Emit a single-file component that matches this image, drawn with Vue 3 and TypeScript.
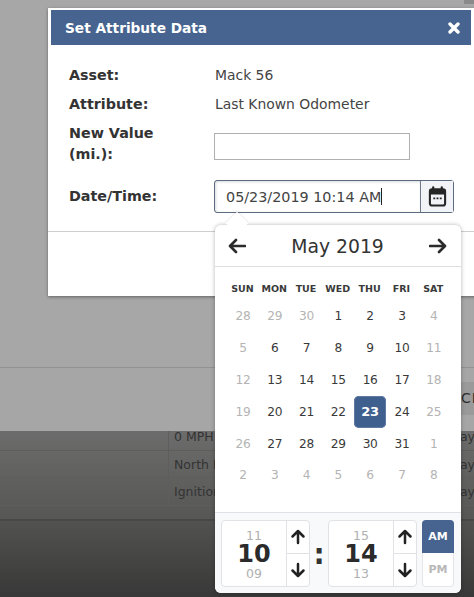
<script setup lang="ts">
const weekdays = ['SUN', 'MON', 'TUE', 'WED', 'THU', 'FRI', 'SAT']
interface Day { n: number; muted: boolean; selected: boolean }
const seq: [number, boolean][] = [
  [28, true], [29, true], [30, true], [1, false], [2, false], [3, false], [4, true],
  [5, true], [6, false], [7, false], [8, false], [9, false], [10, false], [11, true],
  [12, true], [13, false], [14, false], [15, false], [16, false], [17, false], [18, true],
  [19, true], [20, false], [21, false], [22, false], [23, false], [24, false], [25, true],
  [26, true], [27, false], [28, false], [29, false], [30, false], [31, false], [1, true],
  [2, true], [3, true], [4, true], [5, true], [6, true], [7, true], [8, true]
]
const days: Day[] = seq.map(([n, muted]) => ({ n, muted, selected: n === 23 && !muted }))
const rows = ['0 MPH', 'North D', 'Ignition']
</script>

<template>
  <div class="page">
    <div class="top-band"><div class="corner"></div></div>
    <div class="mid-band"><div class="cut-btn">CL</div></div>
    <div class="table">
      <div v-for="r in rows" :key="r" class="tr">
        <div class="td-left"></div>
        <div class="td-main">{{ r }}</div>
        <div class="td-end">ay</div>
      </div>
      <div class="tr-empty"></div>
    </div>
    <div class="foot"></div>

    <section class="modal">
      <header class="modal-head">
        <h2>Set Attribute Data</h2>
        <svg class="close" viewBox="0 0 12 12" width="12" height="12"><path d="M2 2l8 8M10 2l-8 8" stroke="#fff" stroke-width="3.4" stroke-linecap="round"/></svg>
      </header>
      <div class="modal-body">
        <div class="row r1"><span class="lab">Asset:</span><span class="val">Mack 56</span></div>
        <div class="row r2"><span class="lab">Attribute:</span><span class="val">Last Known Odometer</span></div>
        <div class="row r3"><span class="lab">New Value<br />(mi.):</span><div class="text-in"></div></div>
        <div class="row r4">
          <span class="lab">Date/Time:</span>
          <div class="date-in">
            <div class="date-text">05/23/2019 10:14 AM<i class="caret"></i></div>
            <div class="date-btn">
              <svg viewBox="0 0 20 22" width="19" height="21">
                <path d="M5.5 1.5v4M14.5 1.5v4" stroke="#262626" stroke-width="2.4" stroke-linecap="round"/>
                <rect x="2" y="3.5" width="16" height="17" rx="2.2" fill="none" stroke="#262626" stroke-width="2.2"/>
                <rect x="2" y="3.5" width="16" height="5.4" fill="#262626"/>
                <path d="M5.6 13h2M9 13h2M12.4 13h2" stroke="#262626" stroke-width="1.7"/>
              </svg>
            </div>
          </div>
        </div>
      </div>
      <div class="modal-foot"></div>
    </section>

    <section class="picker">
      <div class="nub"></div>
      <div class="pick-head">
        <svg viewBox="0 0 18 16" width="18" height="16"><path d="M8 2L2 8l6 6M2.5 8H17" fill="none" stroke="#2b2b2b" stroke-width="2.6" stroke-linecap="round" stroke-linejoin="round"/></svg>
        <span class="month">May 2019</span>
        <svg viewBox="0 0 18 16" width="18" height="16"><path d="M10 2l6 6-6 6M15.5 8H1" fill="none" stroke="#2b2b2b" stroke-width="2.6" stroke-linecap="round" stroke-linejoin="round"/></svg>
      </div>
      <div class="cal">
        <div class="weeks"><span v-for="w in weekdays" :key="w">{{ w }}</span></div>
        <div class="grid">
          <span v-for="(d, i) in days" :key="i" class="day" :class="{ muted: d.muted, selected: d.selected }">{{ d.n }}</span>
        </div>
      </div>
      <div class="time">
        <div class="spin">
          <div class="nums"><span class="ghost">11</span><strong>10</strong><span class="ghost">09</span></div>
          <div class="arrows">
            <div class="arr"><svg viewBox="0 0 16 16" width="16" height="16"><path d="M2.5 7.5L8 2l5.5 5.5M8 3v11" fill="none" stroke="#222" stroke-width="2.5" stroke-linecap="round" stroke-linejoin="round"/></svg></div>
            <div class="arr"><svg viewBox="0 0 16 16" width="16" height="16"><path d="M2.5 8.5L8 14l5.5-5.5M8 13V2" fill="none" stroke="#222" stroke-width="2.5" stroke-linecap="round" stroke-linejoin="round"/></svg></div>
          </div>
        </div>
        <span class="colon">:</span>
        <div class="spin">
          <div class="nums"><span class="ghost">15</span><strong>14</strong><span class="ghost">13</span></div>
          <div class="arrows">
            <div class="arr"><svg viewBox="0 0 16 16" width="16" height="16"><path d="M2.5 7.5L8 2l5.5 5.5M8 3v11" fill="none" stroke="#222" stroke-width="2.5" stroke-linecap="round" stroke-linejoin="round"/></svg></div>
            <div class="arr"><svg viewBox="0 0 16 16" width="16" height="16"><path d="M2.5 8.5L8 14l5.5-5.5M8 13V2" fill="none" stroke="#222" stroke-width="2.5" stroke-linecap="round" stroke-linejoin="round"/></svg></div>
          </div>
        </div>
        <div class="ampm">
          <div class="am">AM</div>
          <div class="pm">PM</div>
        </div>
      </div>
    </section>
  </div>
</template>

<style>
html, body { margin: 0; background: #a6a6a6; overflow: hidden; }
</style>

<style scoped>
.page {
  position: relative;
  width: 474px;
  height: 597px;
  overflow: hidden;
  font-family: "DejaVu Sans", Verdana, sans-serif;
  background: #444;
  display: flex;
  flex-direction: column;
}
.top-band { height: 368px; background: #a7a7a7; border-bottom: 1px solid #929292; box-sizing: border-box; flex: none; display: flex; justify-content: flex-end; }
.corner { width: 10px; height: 4px; background: #8a8a8a; }
.mid-band { height: 63px; background: #a6a6a6; box-sizing: border-box; flex: none; padding: 14px 0 0 461px; position: relative; z-index: 1; }
.cut-btn { width: 40px; height: 33px; box-sizing: border-box; background: #9a9a9a; font-size: 14px; line-height: 33px; color: #2e2e2e; white-space: nowrap; letter-spacing: 1px; }
.table { flex: none; background: linear-gradient(#6c6c6c, #565654); overflow: hidden; }
.tr { display: flex; height: 27.5px; border-bottom: 1px solid #5e5e5c; box-sizing: border-box; font-size: 12.5px; color: #333; }
.tr:first-child { margin-top: -8px; }
.td-left { width: 168px; border-right: 1px solid #5e5e5e; flex: none; }
.td-main { flex: 1; padding-left: 5px; line-height: 27px; }
.td-end { line-height: 27px; margin-right: -1px; }
.tr-empty { height: 15px; border-bottom: 2px solid #484846; box-sizing: border-box; }
.foot { flex: 1; background: linear-gradient(#525250, #383838); }

.modal {
  position: absolute;
  z-index: 2;
  left: 48px;
  top: 8px;
  width: 440px;
  height: 288px;
  background: #fff;
  box-sizing: border-box;
  padding: 2px 3px 0;
  box-shadow: 0 1px 3px rgba(0, 0, 0, .4);
  display: flex;
  flex-direction: column;
}
.modal-head {
  height: 35px;
  flex: none;
  background: #46648f;
  color: #fff;
  display: flex;
  align-items: center;
  justify-content: space-between;
  padding: 0 11px 0 14px;
  margin-right: 14px;
}
.modal-head h2 { margin: 0; font-size: 13.7px; font-weight: 700; }
.close { display: block; }
.modal-body { flex: none; padding-left: 18px; height: 186px; font-size: 14px; position: relative; }
.row { display: flex; align-items: center; }
.lab { width: 145px; flex: none; font-weight: 700; font-size: 14.3px; line-height: 21px; color: #333; }
.val { color: #444; padding-left: 1px; font-size: 13.9px; }
.r1 { height: 20px; margin-top: 20px; }
.r2 { height: 20px; margin-top: 9px; }
.r3 { height: 44px; margin-top: 8px; }
.r4 { height: 33px; margin-top: 14px; }
.text-in { width: 196px; height: 27px; box-sizing: border-box; border: 1px solid #b0b0b0; margin-top: 4px; }
.date-in { width: 240px; height: 33px; box-sizing: border-box; border: 1px solid #5d6b80; border-radius: 3px; display: flex; }
.date-text { flex: 1; display: flex; align-items: center; padding-left: 11px; font-size: 14.35px; color: #444; white-space: nowrap; box-shadow: inset 1px 1px 3px rgba(0, 0, 0, .15); }
.caret { display: inline-block; width: 1px; height: 17px; background: #222; }
.date-btn { width: 32px; flex: none; border-left: 1px solid #6f7a8a; background: #f2f3f6; display: flex; align-items: center; justify-content: center; }
.modal-foot { border-top: 1px solid #cfcfcf; flex: none; margin-left: -3px; }

.picker {
  position: absolute;
  z-index: 3;
  left: 215px;
  top: 225px;
  width: 246px;
  height: 368px;
  box-sizing: border-box;
  background: #fff;
  border-radius: 6px;
  box-shadow: 0 0 4px rgba(0, 0, 0, .3);
  display: flex;
  flex-direction: column;
}
.nub {
  position: absolute;
  left: 14px;
  top: -10px;
  width: 16px;
  height: 16px;
  background: #fff;
  transform: rotate(45deg);
  box-shadow: -1px -1px 1px rgba(0, 0, 0, .07);
}
.pick-head {
  position: relative;
  height: 42px;
  flex: none;
  box-sizing: border-box;
  border-bottom: 1px solid #dedfe2;
  display: flex;
  align-items: center;
  justify-content: space-between;
  padding: 1px 14px 0 13px;
  color: #333;
}
.month { font-size: 18.8px; margin-top: 1px; }
.cal { flex: none; height: 245px; }
.weeks { display: grid; grid-template-columns: repeat(7, 31.8px); padding: 14px 0 0 11.5px; font-size: 9.5px; font-weight: 700; color: #3a3a3a; text-align: center; line-height: 15px; }
.grid { display: grid; grid-template-columns: repeat(7, 31.8px); grid-auto-rows: 31.9px; padding: 4px 0 0 12px; font-size: 12.2px; letter-spacing: -.3px; }
.day { display: flex; align-items: center; justify-content: center; color: #3a3a3a; border-radius: 5px; }
.day.muted { color: #b4b4b4; }
.day.selected { background: #3f5f8f; color: #fff; font-weight: 700; font-size: 13px; box-shadow: inset 0 0 0 1px #5f7aa0; }
.time {
  flex: 1;
  background: #f7f9fb;
  border-top: 1px solid #dfe3e8;
  border-radius: 0 0 6px 6px;
  display: flex;
  align-items: center;
  padding: 0 6px;
}
.spin { display: flex; height: 67px; border: 1px solid #e0e2e6; border-radius: 4px; background: #fff; box-sizing: border-box; }
.nums { width: 64px; padding-top: 2px; box-sizing: content-box; display: flex; flex-direction: column; align-items: center; justify-content: center; border-right: 1px solid #e0e2e6; }
.nums .ghost { font-size: 12.5px; line-height: 13px; color: #b0b0b0; }
.nums strong { font-size: 24px; line-height: 25px; color: #2b2b2b; }
.arrows { width: 22px; display: flex; flex-direction: column; }
.arr { flex: 1; display: flex; align-items: center; justify-content: center; }
.arr + .arr { border-top: 1px solid #e0e2e6; }
.colon { width: 18px; flex: none; text-align: center; font-size: 28px; line-height: 28px; font-weight: 700; color: #333; margin-top: 4px; }
.ampm { margin-left: 5px; width: 32px; height: 67px; flex: none; display: flex; flex-direction: column; font-size: 11px; font-weight: 700; border-radius: 4px; overflow: hidden; box-sizing: border-box; background: #fff; box-shadow: inset 0 0 0 1px #e3e5e8; }
.am { flex: 1; background: #46648f; color: #fff; display: flex; align-items: center; justify-content: center; }
.pm { flex: 1; color: #b8b8b8; display: flex; align-items: center; justify-content: center; }
</style>
